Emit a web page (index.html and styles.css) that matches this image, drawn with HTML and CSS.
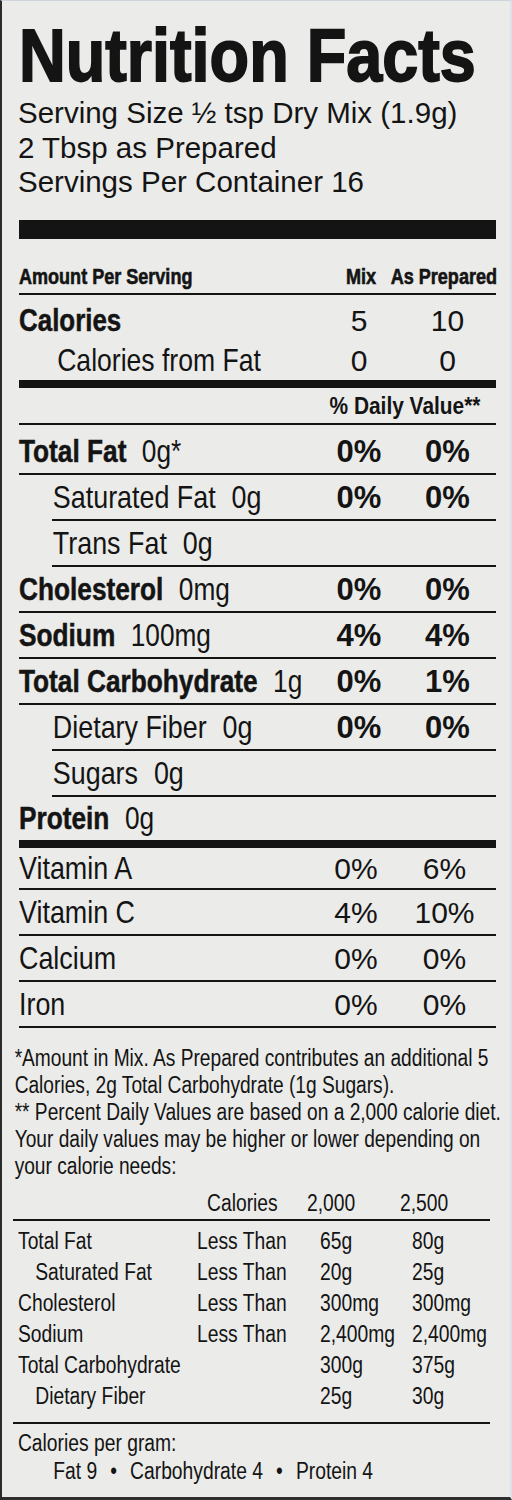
FILE: index.html
```html
<!DOCTYPE html>
<html lang="en">

<head>
    <meta charset="UTF-8">
    <meta name="viewport" content="width=device-width, initial-scale=1.0">
    <title>Nutrition Facts</title>
    <link rel="stylesheet" href="styles.css">
</head>

<body>
    <div class="label">
        <h1 class="title">Nutrition Facts</h1>
        <div class="serving">
            <p>Serving Size ½ tsp Dry Mix (1.9g)</p>
            <p>2 Tbsp as Prepared</p>
            <p>Servings Per Container 16</p>
        </div>
        <div class="bar"></div>

        <!-- amounts -->
        <div class="row head">
            <span class="name">Amount Per Serving</span>
            <span class="col mix">Mix</span>
            <span class="col prep">As Prepared</span>
        </div>
        <div class="row cal">
            <span class="name"><b>Calories</b></span>
            <span class="col num">5</span>
            <span class="col num">10</span>
        </div>
        <div class="row cal fat-cal">
            <span class="name">Calories from Fat</span>
            <span class="col num">0</span>
            <span class="col num">0</span>
        </div>
        <div class="dv"><span>% Daily Value**</span></div>

        <div class="row nut first">
            <span class="name"><b>Total Fat</b> <span class="amt">0g*</span></span>
            <span class="col pct">0%</span>
            <span class="col pct">0%</span>
        </div>
        <div class="row nut sub">
            <span class="name">Saturated Fat <span class="amt">0g</span></span>
            <span class="col pct">0%</span>
            <span class="col pct">0%</span>
        </div>
        <div class="row nut sub">
            <span class="name">Trans Fat <span class="amt">0g</span></span>
            <span class="col"></span>
            <span class="col"></span>
        </div>
        <div class="row nut">
            <span class="name"><b>Cholesterol</b> <span class="amt">0mg</span></span>
            <span class="col pct">0%</span>
            <span class="col pct">0%</span>
        </div>
        <div class="row nut">
            <span class="name"><b>Sodium</b> <span class="amt">100mg</span></span>
            <span class="col pct">4%</span>
            <span class="col pct">4%</span>
        </div>
        <div class="row nut">
            <span class="name"><b>Total Carbohydrate</b> <span class="amt">1g</span></span>
            <span class="col pct">0%</span>
            <span class="col pct">1%</span>
        </div>
        <div class="row nut sub">
            <span class="name">Dietary Fiber <span class="amt">0g</span></span>
            <span class="col pct">0%</span>
            <span class="col pct">0%</span>
        </div>
        <div class="row nut sub">
            <span class="name">Sugars <span class="amt">0g</span></span>
            <span class="col"></span>
            <span class="col"></span>
        </div>
        <div class="row nut protein">
            <span class="name"><b>Protein</b> <span class="amt">0g</span></span>
            <span class="col"></span>
            <span class="col"></span>
        </div>

        <!-- vitamins -->
        <div class="row vit first-vit">
            <span class="name">Vitamin A</span>
            <span class="col num">0%</span>
            <span class="col num">6%</span>
        </div>
        <div class="row vit">
            <span class="name">Vitamin C</span>
            <span class="col num">4%</span>
            <span class="col num">10%</span>
        </div>
        <div class="row vit">
            <span class="name">Calcium</span>
            <span class="col num">0%</span>
            <span class="col num">0%</span>
        </div>
        <div class="row vit">
            <span class="name">Iron</span>
            <span class="col num">0%</span>
            <span class="col num">0%</span>
        </div>

        <!-- footnotes -->
        <div class="foot">
            <p class="note">
                *Amount in Mix. As Prepared contributes an additional 5<br>
                Calories, 2g Total Carbohydrate (1g Sugars).<br>
                ** Percent Daily Values are based on a 2,000 calorie diet.<br>
                Your daily values may be higher or lower depending on<br>
                your calorie needs:
            </p>
            <div class="limits-head">
                <span></span>
                <span>Calories</span>
                <span>2,000</span>
                <span>2,500</span>
            </div>
            <div class="limits">
                <div class="lim">
                    <span>Total Fat</span><span>Less Than</span><span>65g</span><span>80g</span>
                </div>
                <div class="lim">
                    <span class="in">Saturated Fat</span><span>Less Than</span><span>20g</span><span>25g</span>
                </div>
                <div class="lim">
                    <span>Cholesterol</span><span>Less Than</span><span>300mg</span><span>300mg</span>
                </div>
                <div class="lim">
                    <span>Sodium</span><span>Less Than</span><span>2,400mg</span><span>2,400mg</span>
                </div>
                <div class="lim">
                    <span>Total Carbohydrate</span><span></span><span>300g</span><span>375g</span>
                </div>
                <div class="lim">
                    <span class="in">Dietary Fiber</span><span></span><span>25g</span><span>30g</span>
                </div>
            </div>
            <p class="per-gram gram-top">Calories per gram:</p>
            <p class="per-gram grams">Fat 9<span class="dot">•</span>Carbohydrate 4<span class="dot">•</span>Protein 4</p>
        </div>
    </div>
</body>

</html>
```

FILE: styles.css
```css
* {
    margin: 0;
    padding: 0;
    box-sizing: border-box;
}

/* no condensed face is installed, so narrow text is squeezed with scaleX */
body {
    width: 512px;
    height: 1500px;
    overflow: hidden;
    background: #ebebe9;
    color: #141414;
    font-family: "Liberation Sans", Arial, sans-serif;
    border-top: 1px solid #cdd4de;
    border-left: 2px solid #2b2b2b;
    border-right: 2px solid #dde2e8;
    border-bottom: 3px solid #2f2f2f;
}

.label {
    padding: 15px 14px 0 17px;
}

.title {
    font-size: 74px;
    line-height: 80px;
    font-weight: bold;
    white-space: nowrap;
    -webkit-text-stroke: 1.8px #141414;
    transform: scaleX(0.875);
    transform-origin: left center;
}

.serving p {
    font-size: 29.5px;
    line-height: 34.5px;
    margin-left: -1px;
    white-space: nowrap;
}

.bar {
    height: 19px;
    margin-top: 20.5px;
    background: #141414;
}

.row {
    display: grid;
    grid-template-columns: minmax(0, 1fr) 80px 97px;
    align-items: baseline;
    white-space: nowrap;
}

.name {
    transform: scaleX(0.82);
    transform-origin: left center;
}

.row b {
    -webkit-text-stroke: 0.5px #141414;
}

.col {
    text-align: center;
}

.head {
    grid-template-rows: 26px;
    font-size: 22px;
    line-height: 26px;
    font-weight: bold;
    padding: 25px 0 3px;
    border-bottom: 2px solid #141414;
    -webkit-text-stroke: 0.6px #141414;
}

.head .mix {
    margin-left: 4px;
    transform: scaleX(0.82);
}

.head .prep {
    display: flex;
    justify-content: flex-end;
    margin-right: -1px;
    transform: scaleX(0.82);
    transform-origin: right center;
}

.cal {
    grid-template-rows: 41px;
    font-size: 32px;
    line-height: 41px;
    padding-top: 5px;
}

.cal .name {
    transform: scaleX(0.81);
}

.fat-cal {
    grid-template-rows: 39px;
    line-height: 39px;
    padding-top: 0;
    border-bottom: 8px solid #141414;
}

.fat-cal .name {
    padding-left: 46px;
    transform: scaleX(0.83);
}

.num {
    font-size: 30px;
}

.pct {
    font-size: 31px;
    font-weight: bold;
}

.dv {
    font-size: 24px;
    line-height: 35px;
    font-weight: bold;
    text-align: right;
    padding-right: 16px;
    border-bottom: 2px solid #141414;
    white-space: nowrap;
}

.dv span {
    display: inline-block;
    transform: scaleX(0.87);
    transform-origin: right center;
}

.nut {
    grid-template-rows: 44px;
    font-size: 32px;
    line-height: 44px;
    border-bottom: 2px solid #141414;
}

.first {
    padding-top: 4px;
}

.sub {
    margin-left: 33px;
}

.sub .name {
    padding-left: 1px;
    transform: scaleX(0.84);
}

.amt {
    margin-left: 10px;
}

.protein {
    grid-template-rows: 43px;
    line-height: 43px;
    border-bottom: 8px solid #141414;
}

.vit {
    grid-template-rows: 44px;
    font-size: 32px;
    line-height: 44px;
    border-bottom: 2px solid #141414;
}

.vit .name {
    transform: scaleX(0.84);
}

.first-vit {
    grid-template-rows: 40px;
    line-height: 40px;
}

.vit .num {
    margin-right: 6px;
}

.foot {
    margin: 0 6px 0 -6px;
    font-size: 23.5px;
    white-space: nowrap;
}

.note {
    padding: 17px 0 0 2px;
    line-height: 27px;
    transform: scaleX(0.815);
    transform-origin: left center;
}

.limits-head,
.lim {
    display: grid;
    padding-left: 5px;
    line-height: 31px;
}

.limits-head span,
.lim span {
    transform: scaleX(0.82);
    transform-origin: left center;
}

.limits-head {
    grid-template-columns: 189px 100px 93px minmax(0, 1fr);
    margin-top: 8px;
    border-bottom: 2px solid #141414;
}

.lim {
    grid-template-columns: 179px 123px 92px minmax(0, 1fr);
}

.limits {
    padding: 5px 0 10px;
    border-bottom: 2px solid #141414;
}

.lim .in {
    padding-left: 21px;
}

.per-gram {
    padding-left: 6px;
    line-height: 28px;
    transform: scaleX(0.82);
    transform-origin: left center;
}

.gram-top {
    padding-top: 5px;
}

.grams {
    padding-left: 49px;
}

.dot {
    margin: 0 16px;
}
```
